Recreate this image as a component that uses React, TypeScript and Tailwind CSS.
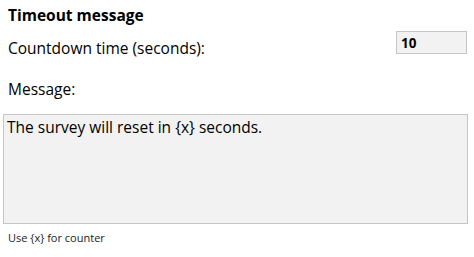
export default function App() {
  return (
    <div
      className="w-[474px] h-[257px] bg-white text-black px-[3px] pt-[5px]"
      style={{ fontFamily: '"Segoe UI", "Open Sans", sans-serif' }}
    >
      <h2 className="pl-[5px] text-[15.5px] leading-[21px] font-bold">Timeout message</h2>
      <div className="flex items-start justify-between mt-[5px]">
        <label className="pl-[5px] pt-[6px] text-[15.5px] leading-[22px]">Countdown time (seconds):</label>
        <input
          type="text"
          defaultValue="10"
          className="mr-[4px] w-[71px] h-[23px] px-[4px] bg-[#f2f2f2] border border-[#c6c6c6] text-[13.5px] font-bold outline-none"
        />
      </div>
      <div className="pl-[5px] mt-[19px] text-[15.5px] leading-[22px]">Message:</div>
      <textarea
        defaultValue="The survey will reset in {x} seconds."
        className="mt-[14px] block w-[465px] h-[110px] resize-none bg-[#f2f2f2] border border-[#c6c6c6] px-[3px] py-[1px] text-[15.5px] leading-[22px] outline-none"
      />
      <div className="pl-[5px] mt-[7px] text-[11px] leading-[14px] text-[#222]">Use {'{x}'} for counter</div>
    </div>
  )
}
